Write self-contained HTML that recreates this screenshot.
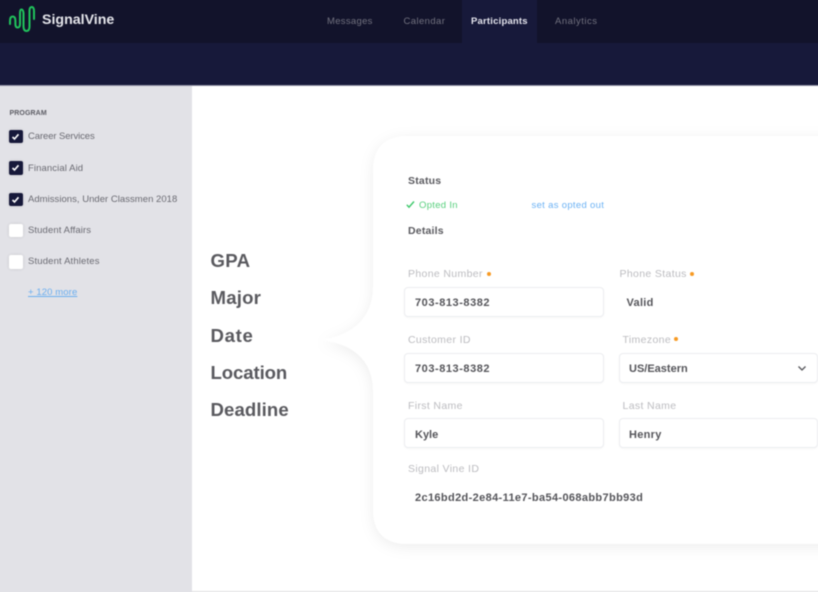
<!DOCTYPE html>
<html><head><meta charset="utf-8">
<style>
html,body{margin:0;padding:0;background:#fff;width:818px;height:592px;overflow:hidden}
#w{position:absolute;left:0;top:0;width:818px;height:592px;overflow:hidden}
#p{position:absolute;left:-10px;top:-10px;width:848px;height:622px;overflow:hidden;background:#fff;font-family:"Liberation Sans",sans-serif;filter:blur(.45px)}
#p div{position:absolute;white-space:nowrap}
.nav{top:15.5px;font-size:9.5px;line-height:12px;color:#72727f;letter-spacing:.3px}
.cb{left:9px;width:13.5px;height:13.5px;border-radius:2px;background:#fff;box-shadow:0 0 3px rgba(0,0,0,.12)}
.on{background:#17193a}
.cl{left:28px;font-size:9.5px;line-height:12px;color:#6a6a72;letter-spacing:.1px}
.big{left:210.5px;font-size:18.6px;line-height:24px;color:#5a5a5f;font-weight:bold}
.lb{font-size:10.5px;line-height:13px;color:#bcbcc0;letter-spacing:.35px}
.dot{width:4px;height:4px;border-radius:50%;background:#f79a24}
.inp{height:28px;background:#fff;border:1px solid #ecedf0;border-radius:4px;box-shadow:0 1px 2px rgba(0,0,0,.03)}
.v{font-size:11px;line-height:14px;color:#55555a;font-weight:bold;letter-spacing:.3px}
.h{left:408px;font-size:10.5px;line-height:13px;color:#5a5a5f;font-weight:bold;letter-spacing:.2px}
</style></head>
<body><div id="w"><div id="p"><div id="q" style="left:10px;top:10px;width:838px;height:612px">
<div style="left:-10px;top:-10px;width:848px;height:53px;background:#12132b"></div>
<div style="left:-10px;top:43px;width:848px;height:42px;background:#17193a"></div>
<div style="left:462px;top:-10px;width:75px;height:53px;background:#17193a"></div>
<div style="left:-10px;top:85px;width:848px;height:1px;background:#8f8fa3"></div>
<svg style="position:absolute;left:0;top:0" width="40" height="40" viewBox="0 0 40 40"><path d="M10 24V21Q10 16.5 12.7 16.5T15.4 21V24Q15.4 27.5 17.7 27.5T20 24V13Q20 9.5 21.5 9.5T23.5 13V26Q23.5 31 26.5 31T29.5 26V11Q29.5 7 31.7 7T34 11V19" fill="none" stroke="#20c45c" stroke-width="2" stroke-linecap="round"/></svg>
<div style="left:42px;top:10px;font-size:14.2px;line-height:20px;color:#e4e5ea;font-weight:bold">SignalVine</div>
<div class="nav" style="left:327px">Messages</div>
<div class="nav" style="left:403.5px;letter-spacing:.4px">Calendar</div>
<div class="nav" style="left:471px;color:#e6e6ee;font-weight:bold;letter-spacing:.2px">Participants</div>
<div class="nav" style="left:555px;letter-spacing:.5px">Analytics</div>

<div style="left:-10px;top:86px;width:202px;height:526px;background:#e2e2e7"></div>
<div style="left:9.5px;top:109px;font-size:7px;line-height:9px;color:#5c5c64;font-weight:bold;letter-spacing:.1px">PROGRAM</div>
<div class="cb on" style="top:129.5px"></div><svg style="position:absolute;left:9px;top:130px" width="13" height="13"><path d="M3.5 7L5.5 9L9.5 4.3" fill="none" stroke="#fff" stroke-width="1.6"/></svg>
<div class="cl" style="top:130.5px;letter-spacing:-.1px">Career Services</div>
<div class="cb on" style="top:161px"></div><svg style="position:absolute;left:9px;top:161px" width="13" height="13"><path d="M3.5 7L5.5 9L9.5 4.3" fill="none" stroke="#fff" stroke-width="1.6"/></svg>
<div class="cl" style="top:162.5px">Financial Aid</div>
<div class="cb on" style="top:192.5px"></div><svg style="position:absolute;left:9px;top:192.5px" width="13" height="13"><path d="M3.5 7L5.5 9L9.5 4.3" fill="none" stroke="#fff" stroke-width="1.6"/></svg>
<div class="cl" style="top:193.5px;letter-spacing:.03px">Admissions, Under Classmen 2018</div>
<div class="cb" style="top:223.5px"></div>
<div class="cl" style="top:224.5px">Student Affairs</div>
<div class="cb" style="top:255px"></div>
<div class="cl" style="top:256px;letter-spacing:.15px">Student Athletes</div>
<div style="left:28px;top:287px;font-size:9.5px;line-height:12px;color:#6aaef0;text-decoration:underline;letter-spacing:.1px">+ 120 more</div>

<div class="big" style="top:249px;letter-spacing:.3px">GPA</div>
<div class="big" style="top:286px;letter-spacing:.2px">Major</div>
<div class="big" style="top:323.5px;letter-spacing:.7px">Date</div>
<div class="big" style="top:361px;letter-spacing:-.1px">Location</div>
<div class="big" style="top:398px;letter-spacing:.1px">Deadline</div>

<svg style="position:absolute;left:300px;top:120px" width="538" height="450" viewBox="300 120 538 450">
<defs><filter id="s" x="-10%" y="-10%" width="120%" height="120%"><feDropShadow dx="0" dy="3" stdDeviation="7" flood-color="#000" flood-opacity=".07"/></filter></defs>
<path d="M850 136H408Q373 136 373 171V287C373 318 352 336 320 340C352 343 373 360 373 390V509Q373 544 408 544H850Z" fill="#fff" filter="url(#s)"/></svg>

<div class="h" style="top:174.5px">Status</div>
<svg style="position:absolute;left:405px;top:199px" width="11" height="11"><path d="M1.8 5.8L4 8.2L9 2.5" fill="none" stroke="#3cc86a" stroke-width="1.4"/></svg>
<div style="left:419px;top:199.5px;font-size:9.5px;line-height:12px;color:#56cf7c;letter-spacing:.3px">Opted In</div>
<div style="left:531.5px;top:199.5px;font-size:9.5px;line-height:12px;color:#6cb2f4;letter-spacing:.32px">set as opted out</div>
<div class="h" style="top:224.5px">Details</div>

<div class="lb" style="left:408px;top:267.5px">Phone Number</div><div class="dot" style="left:487px;top:271.5px"></div>
<div class="lb" style="left:619.5px;top:267.5px">Phone Status</div><div class="dot" style="left:690px;top:271.5px"></div>
<div class="inp" style="left:404px;top:287px;width:198px"></div>
<div class="v" style="left:415px;top:295.5px;letter-spacing:.55px">703-813-8382</div>
<div class="v" style="left:626.5px;top:295.5px">Valid</div>

<div class="lb" style="left:408px;top:333.5px">Customer ID</div>
<div class="lb" style="left:622.5px;top:333.5px">Timezone</div><div class="dot" style="left:674px;top:337px"></div>
<div class="inp" style="left:404px;top:353px;width:198px"></div>
<div class="inp" style="left:619px;top:353px;width:197px"></div>
<div class="v" style="left:415px;top:361.5px;letter-spacing:.55px">703-813-8382</div>
<div class="v" style="left:629px;top:361.5px;letter-spacing:0">US/Eastern</div>
<svg style="position:absolute;left:797px;top:365px" width="11" height="8"><path d="M1.5 1.5L5 5L8.5 1.5" fill="none" stroke="#55555a" stroke-width="1.3"/></svg>

<div class="lb" style="left:408px;top:399.5px">First Name</div>
<div class="lb" style="left:622.5px;top:399.5px">Last Name</div>
<div class="inp" style="left:404px;top:418px;width:198px"></div>
<div class="inp" style="left:619px;top:418px;width:197px"></div>
<div class="v" style="left:415px;top:427.5px;letter-spacing:0">Kyle</div>
<div class="v" style="left:629px;top:427.5px">Henry</div>

<div class="lb" style="left:408px;top:463px">Signal Vine ID</div>
<div class="v" style="left:415px;top:490.5px;letter-spacing:.36px">2c16bd2d-2e84-11e7-ba54-068abb7bb93d</div>
<div style="left:192px;top:591px;width:646px;height:1px;background:#dedee0"></div>
</div></div></div></body></html>
